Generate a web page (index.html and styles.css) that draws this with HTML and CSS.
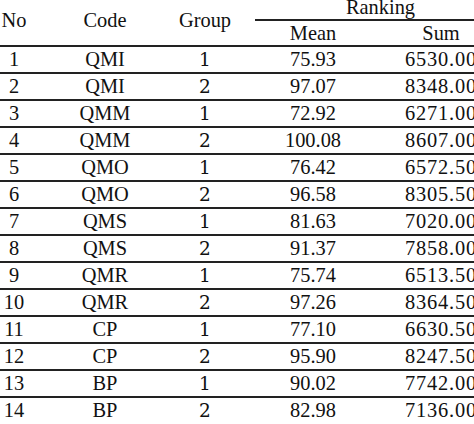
FILE: index.html
```html
<!DOCTYPE html>
<html>
<head>
<meta charset="utf-8">
<link rel="stylesheet" href="styles.css">
</head>
<body>
<div class="table">
  <div class="head">
    <div class="hc c-no">No</div>
    <div class="hc c-code">Code</div>
    <div class="hc c-group">Group</div>
    <div class="rank-title">Ranking</div>
    <div class="sub c-mean">Mean</div>
    <div class="sub c-sum">Sum</div>
  </div>
  <div class="row"><div class="c-no">1</div><div class="c-code">QMI</div><div class="c-group">1</div><div class="c-mean">75.93</div><div class="c-sum">6530.00</div></div>
  <div class="row"><div class="c-no">2</div><div class="c-code">QMI</div><div class="c-group">2</div><div class="c-mean">97.07</div><div class="c-sum">8348.00</div></div>
  <div class="row"><div class="c-no">3</div><div class="c-code">QMM</div><div class="c-group">1</div><div class="c-mean">72.92</div><div class="c-sum">6271.00</div></div>
  <div class="row"><div class="c-no">4</div><div class="c-code">QMM</div><div class="c-group">2</div><div class="c-mean">100.08</div><div class="c-sum">8607.00</div></div>
  <div class="row"><div class="c-no">5</div><div class="c-code">QMO</div><div class="c-group">1</div><div class="c-mean">76.42</div><div class="c-sum">6572.50</div></div>
  <div class="row"><div class="c-no">6</div><div class="c-code">QMO</div><div class="c-group">2</div><div class="c-mean">96.58</div><div class="c-sum">8305.50</div></div>
  <div class="row"><div class="c-no">7</div><div class="c-code">QMS</div><div class="c-group">1</div><div class="c-mean">81.63</div><div class="c-sum">7020.00</div></div>
  <div class="row"><div class="c-no">8</div><div class="c-code">QMS</div><div class="c-group">2</div><div class="c-mean">91.37</div><div class="c-sum">7858.00</div></div>
  <div class="row"><div class="c-no">9</div><div class="c-code">QMR</div><div class="c-group">1</div><div class="c-mean">75.74</div><div class="c-sum">6513.50</div></div>
  <div class="row"><div class="c-no">10</div><div class="c-code">QMR</div><div class="c-group">2</div><div class="c-mean">97.26</div><div class="c-sum">8364.50</div></div>
  <div class="row"><div class="c-no">11</div><div class="c-code">CP</div><div class="c-group">1</div><div class="c-mean">77.10</div><div class="c-sum">6630.50</div></div>
  <div class="row"><div class="c-no">12</div><div class="c-code">CP</div><div class="c-group">2</div><div class="c-mean">95.90</div><div class="c-sum">8247.50</div></div>
  <div class="row"><div class="c-no">13</div><div class="c-code">BP</div><div class="c-group">1</div><div class="c-mean">90.02</div><div class="c-sum">7742.00</div></div>
  <div class="row"><div class="c-no">14</div><div class="c-code">BP</div><div class="c-group">2</div><div class="c-mean">82.98</div><div class="c-sum">7136.00</div></div>
</div>
</body>
</html>
```
FILE: styles.css
```css
html, body {
  margin: 0;
  padding: 0;
  background: #fff;
  overflow: hidden;
}
.table {
  width: 506px;
  margin-top: -4px;
  font-family: "Liberation Serif", "Times New Roman", serif;
  font-size: 20.4px;
  color: #111;
}
.head, .row {
  display: grid;
  grid-template-columns: 28px 132px 90px 126px 130px;
}
.head {
  grid-template-rows: 25px 24px;
}
.head .hc {
  grid-row: 1 / span 2;
  line-height: 49px;
}
.c-no, .c-code, .c-group, .c-mean, .c-sum {
  text-align: center;
  white-space: nowrap;
}
.c-code {
  padding-left: 22px;
}
.rank-title {
  grid-row: 1;
  grid-column: 4 / span 2;
  margin-left: 5px;
  line-height: 22px;
  padding-bottom: 1px;
  border-bottom: 2px solid #222;
  text-align: center;
}
.sub {
  grid-row: 2;
  line-height: 24px;
}
.head .c-mean { grid-column: 4; }
.head .c-sum { grid-column: 5; }
.row {
  border-top: 2px solid #222;
  line-height: 25px;
}
.row .c-sum {
  letter-spacing: 0.8px;
}
.row .c-group {
  font-family: "DejaVu Serif", serif;
  font-size: 18.5px;
}
```
